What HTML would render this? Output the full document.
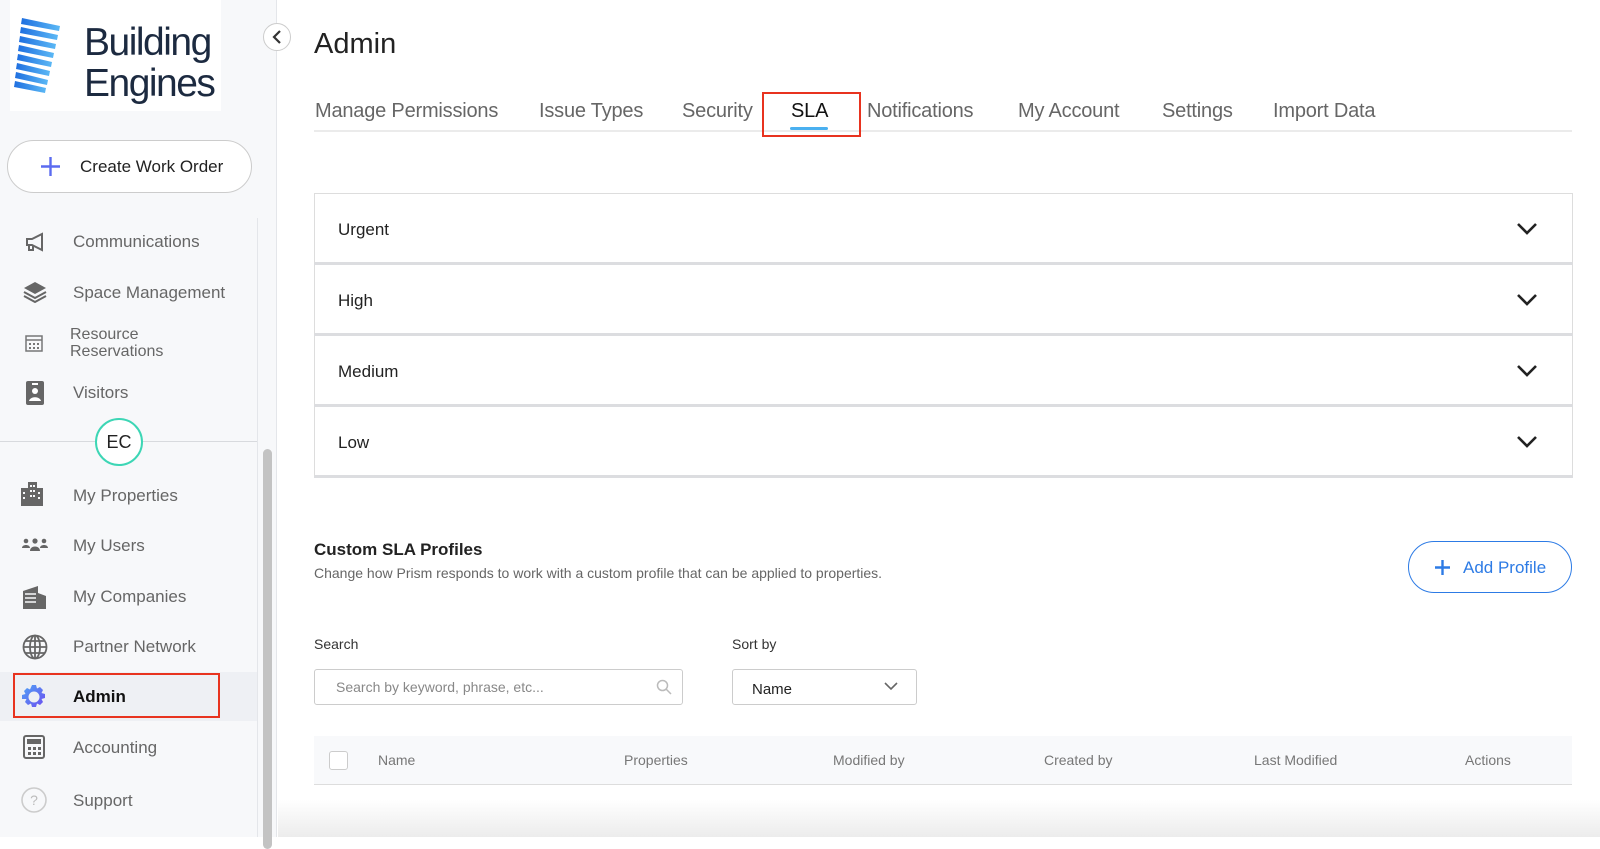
<!DOCTYPE html>
<html><head><meta charset="utf-8"><style>
*{box-sizing:border-box;margin:0;padding:0}
body{width:1600px;height:837px;overflow:hidden;background:#fff;font-family:"Liberation Sans",Arial,sans-serif;position:relative}
.abs{position:absolute}
#side{left:0;top:0;width:277px;height:837px;background:#f7f8fa;border-right:1px solid #e4e6ea}
.nav{position:absolute;left:73px;font-size:17px;color:#666;white-space:nowrap}
.ic{position:absolute;left:22px}
.tab{position:absolute;top:100px;font-size:20px;color:#666;white-space:nowrap;letter-spacing:-0.2px}
.row{position:absolute;left:314px;width:1259px;height:71px;background:#fff;border:1px solid #ddd;border-top:none;border-bottom:3px solid #dcdde0}
.row span{position:absolute;left:23px;top:26px;font-size:17px;color:#222}
.row svg{position:absolute;right:34px;top:28px}
.th{position:absolute;top:752px;font-size:14px;color:#777}
</style></head><body>
<div id="side" class="abs">
  <div class="abs" style="left:10px;top:0;width:211px;height:111px;background:#fff"></div>
  <svg class="abs" style="left:10px;top:16px" width="56" height="78" viewBox="0 0 56 78">
    <defs><linearGradient id="lg" x1="0" y1="0" x2="1" y2="0"><stop offset="0" stop-color="#1f6fe0"/><stop offset="1" stop-color="#5bb8f5"/></linearGradient></defs>
    <g fill="url(#lg)">
      <polygon points="12,2 50,10 49,15 11,8"/><polygon points="11,11 48,19 47,24 10,17"/>
      <polygon points="10,20 46,28 45,33 9,26"/><polygon points="9,29 44,37 43,42 8,35"/>
      <polygon points="8,38 42,46 41,51 7,44"/><polygon points="7,47 40,55 39,60 6,53"/>
      <polygon points="6,56 38,64 37,69 5,62"/><polygon points="5,65 36,72 35,77 4,71"/>
    </g>
  </svg>
  <div class="abs" style="left:84px;top:22px;font-size:39px;line-height:41px;color:#1c2a40;letter-spacing:-1.5px">Building<br>Engines</div>
  <div class="abs" style="left:263px;top:23px;width:28px;height:28px;border-radius:50%;background:#fff;border:1px solid #ccc;z-index:3"></div>
  <svg class="abs" style="left:270px;top:29px;z-index:4" width="14" height="16"><path d="M10 2 L4 8 L10 14" fill="none" stroke="#333" stroke-width="2.2"/></svg>
  <div class="abs" style="left:7px;top:140px;width:245px;height:53px;border:1px solid #ccc;border-radius:27px;background:#fff"></div>
  <svg class="abs" style="left:40px;top:156px" width="21" height="21"><path d="M10.5 1v19M1 10.5h19" stroke="#5b6bf0" stroke-width="2.4"/></svg>
  <div class="abs" style="left:80px;top:157px;font-size:17px;color:#222">Create Work Order</div>
  <div class="abs" style="left:257px;top:218px;width:1px;height:619px;background:#e4e6ea"></div>

  <svg class="ic" style="top:232px;left:25px" width="22" height="20"><path d="M2 7h5l10-5v16L7 13H2z M4 13v5h4v-5" fill="none" stroke="#666" stroke-width="2"/></svg>
  <div class="nav" style="top:232px">Communications</div>
  <svg class="ic" style="top:281px;left:23px" width="24" height="22"><path d="M12 1L23 7 12 13 1 7z" fill="#666"/><path d="M1 11l11 6 11-6M1 15l11 6 11-6" fill="none" stroke="#666" stroke-width="2"/></svg>
  <div class="nav" style="top:283px">Space Management</div>
  <svg class="ic" style="top:334px;left:25px" width="18" height="18"><rect x="1" y="2" width="16" height="15" fill="none" stroke="#777" stroke-width="1.5"/><path d="M1 6h16" stroke="#777" stroke-width="1.5"/><g fill="#777"><rect x="4" y="9" width="2" height="2"/><rect x="8" y="9" width="2" height="2"/><rect x="12" y="9" width="2" height="2"/><rect x="4" y="13" width="2" height="2"/><rect x="8" y="13" width="2" height="2"/><rect x="12" y="13" width="2" height="2"/></g></svg>
  <div class="nav" style="top:326px;left:70px;line-height:17px;font-size:16px">Resource<br>Reservations</div>
  <svg class="ic" style="top:381px;left:26px" width="18" height="24"><rect width="18" height="24" rx="2" fill="#666"/><circle cx="9" cy="10" r="3" fill="#fff"/><path d="M3 20c1-5 11-5 12 0z" fill="#fff"/><rect x="6" y="2" width="6" height="2" fill="#fff"/></svg>
  <div class="nav" style="top:383px">Visitors</div>

  <div class="abs" style="left:0;top:441px;width:257px;height:1px;background:#d8dade"></div>
  <div class="abs" style="left:95px;top:418px;width:48px;height:48px;border-radius:50%;border:2px solid #3dd6b5;background:#fff;font-size:18px;color:#222;text-align:center;line-height:44px">EC</div>

  <svg class="ic" style="top:482px;left:21px" width="22" height="24"><g fill="#666"><rect x="0" y="6" width="8" height="18"/><rect x="7" y="0" width="9" height="24"/><rect x="15" y="6" width="7" height="18"/></g><g fill="#f7f8fa"><rect x="9" y="3" width="2" height="2"/><rect x="12" y="3" width="2" height="2"/><rect x="9" y="8" width="2" height="2"/><rect x="12" y="8" width="2" height="2"/><rect x="9" y="13" width="2" height="2"/><rect x="12" y="13" width="2" height="2"/><rect x="2" y="10" width="2" height="2"/><rect x="2" y="15" width="2" height="2"/><rect x="17" y="10" width="2" height="2"/><rect x="17" y="15" width="2" height="2"/></g></svg>
  <div class="nav" style="top:486px">My Properties</div>
  <svg class="ic" style="top:538px;left:22px" width="26" height="14"><g fill="#666"><circle cx="4" cy="3" r="2.3"/><circle cx="13" cy="3" r="2.6"/><circle cx="22" cy="3" r="2.3"/><path d="M0 10c0-4 8-4 8 0zM8 13c0-6 10-6 10 0zM18 10c0-4 8-4 8 0z"/></g></svg>
  <div class="nav" style="top:536px">My Users</div>
  <svg class="ic" style="top:585px;left:22px" width="26" height="24"><path d="M1 24V6L16 1v23zM16 8l8 3v13h-8z" fill="#666"/><path d="M3 9h11M3 13h11M3 17h11" stroke="#f7f8fa" stroke-width="1.5"/></svg>
  <div class="nav" style="top:587px">My Companies</div>
  <svg class="ic" style="top:634px;left:22px" width="26" height="26"><g fill="none" stroke="#666" stroke-width="1.8"><circle cx="13" cy="13" r="11.5"/><ellipse cx="13" cy="13" rx="5" ry="11.5"/><path d="M1.5 13h23M3 7h20M3 19h20M13 1.5v23"/></g></svg>
  <div class="nav" style="top:637px">Partner Network</div>

  <div class="abs" style="left:0;top:672px;width:257px;height:49px;background:#eef0f4"></div>
  <div class="abs" style="left:13px;top:673px;width:207px;height:45px;border:2px solid #e8331f"></div>
  <svg class="ic" style="top:684px;left:21px" width="26" height="26" viewBox="0 0 26 26"><defs><linearGradient id="g" x1="0" y1="0" x2="1" y2="1"><stop offset="0" stop-color="#4ea3f5"/><stop offset="1" stop-color="#6d4ef0"/></linearGradient></defs><path d="M11 1h4l1 3.5 3-1.5 3 3-1.5 3 3.5 1v4l-3.5 1 1.5 3-3 3-3-1.5-1 3.5h-4l-1-3.5-3 1.5-3-3 1.5-3L1 15v-4l3.5-1L3 7l3-3 3 1.5z" fill="url(#g)"/><circle cx="13" cy="13" r="5.5" fill="#eef0f4"/></svg>
  <div class="nav" style="top:687px;color:#111;font-weight:bold">Admin</div>
  <svg class="ic" style="top:735px;left:23px" width="22" height="24"><rect x="1" y="1" width="20" height="22" rx="2" fill="none" stroke="#666" stroke-width="2"/><rect x="4" y="4" width="14" height="5" fill="#666"/><g fill="#666"><rect x="5" y="12" width="3" height="3"/><rect x="10" y="12" width="3" height="3"/><rect x="15" y="12" width="3" height="3"/><rect x="5" y="17" width="3" height="3"/><rect x="10" y="17" width="3" height="3"/><rect x="15" y="17" width="3" height="3"/></g></svg>
  <div class="nav" style="top:738px">Accounting</div>
  <svg class="ic" style="top:787px;left:21px" width="26" height="26"><circle cx="13" cy="13" r="12" fill="none" stroke="#ccc" stroke-width="1.6"/><text x="13" y="18" text-anchor="middle" font-size="14" fill="#bbb" font-family="Liberation Sans">?</text></svg>
  <div class="nav" style="top:791px">Support</div>
  <div class="abs" style="left:263px;top:449px;width:9px;height:400px;border-radius:5px;background:#c3c3c3"></div>
</div>

<div class="abs" style="left:314px;top:28px;font-size:29px;color:#222">Admin</div>
<div class="abs" style="left:314px;top:130px;width:1258px;height:2px;background:#ebebeb"></div>
<div class="tab" style="left:315px">Manage Permissions</div>
<div class="tab" style="left:539px">Issue Types</div>
<div class="tab" style="left:682px">Security</div>
<div class="tab" style="left:791px;color:#111">SLA</div>
<div class="tab" style="left:867px">Notifications</div>
<div class="tab" style="left:1018px">My Account</div>
<div class="tab" style="left:1162px">Settings</div>
<div class="tab" style="left:1273px">Import Data</div>
<div class="abs" style="left:790px;top:127px;width:38px;height:3px;background:#4ab0f0;border-radius:2px"></div>
<div class="abs" style="left:762px;top:92px;width:99px;height:45px;border:2px solid #e8331f"></div>

<div class="abs" style="left:314px;top:193px;width:1259px;height:1px;background:#ddd"></div>
<div class="row" style="top:194px"><span>Urgent</span><svg width="22" height="14"><path d="M2 2l9 9 9-9" fill="none" stroke="#222" stroke-width="2.6"/></svg></div>
<div class="row" style="top:265px"><span>High</span><svg width="22" height="14"><path d="M2 2l9 9 9-9" fill="none" stroke="#222" stroke-width="2.6"/></svg></div>
<div class="row" style="top:336px"><span>Medium</span><svg width="22" height="14"><path d="M2 2l9 9 9-9" fill="none" stroke="#222" stroke-width="2.6"/></svg></div>
<div class="row" style="top:407px"><span>Low</span><svg width="22" height="14"><path d="M2 2l9 9 9-9" fill="none" stroke="#222" stroke-width="2.6"/></svg></div>

<div class="abs" style="left:314px;top:540px;font-size:17px;font-weight:bold;color:#222">Custom SLA Profiles</div>
<div class="abs" style="left:314px;top:565px;font-size:14px;color:#666">Change how Prism responds to work with a custom profile that can be applied to properties.</div>
<div class="abs" style="left:1408px;top:541px;width:164px;height:52px;border:1.5px solid #2d7be5;border-radius:26px"></div>
<svg class="abs" style="left:1434px;top:559px" width="17" height="17"><path d="M8.5 1v15M1 8.5h15" stroke="#2d7be5" stroke-width="2.4"/></svg>
<div class="abs" style="left:1463px;top:558px;font-size:17px;color:#2d7be5">Add Profile</div>

<div class="abs" style="left:314px;top:636px;font-size:14px;color:#333">Search</div>
<div class="abs" style="left:732px;top:636px;font-size:14px;color:#333">Sort by</div>
<div class="abs" style="left:314px;top:669px;width:369px;height:36px;border:1px solid #ccc;border-radius:3px"></div>
<div class="abs" style="left:336px;top:679px;font-size:14px;color:#888">Search by keyword, phrase, etc...</div>
<svg class="abs" style="left:656px;top:679px" width="16" height="16"><circle cx="6.5" cy="6.5" r="5" fill="none" stroke="#bbb" stroke-width="1.5"/><path d="M10 10l5 5" stroke="#bbb" stroke-width="1.5"/></svg>
<div class="abs" style="left:732px;top:669px;width:185px;height:36px;border:1px solid #ccc;border-radius:3px"></div>
<div class="abs" style="left:752px;top:681px;font-size:15px;color:#222">Name</div>
<svg class="abs" style="left:884px;top:681px" width="14" height="10"><path d="M1 2l6 6 6-6" fill="none" stroke="#666" stroke-width="1.6"/></svg>

<div class="abs" style="left:314px;top:736px;width:1258px;height:49px;background:#f8f9fb;border-bottom:1px solid #ddd"></div>
<div class="abs" style="left:329px;top:751px;width:19px;height:19px;border:1.5px solid #ccc;border-radius:3px;background:#fff"></div>
<div class="th" style="left:378px">Name</div>
<div class="th" style="left:624px">Properties</div>
<div class="th" style="left:833px">Modified by</div>
<div class="th" style="left:1044px">Created by</div>
<div class="th" style="left:1254px">Last Modified</div>
<div class="th" style="left:1465px">Actions</div>
<div class="abs" style="left:278px;top:800px;width:1322px;height:37px;background:linear-gradient(#fff,#ececec)"></div>
</body></html>
